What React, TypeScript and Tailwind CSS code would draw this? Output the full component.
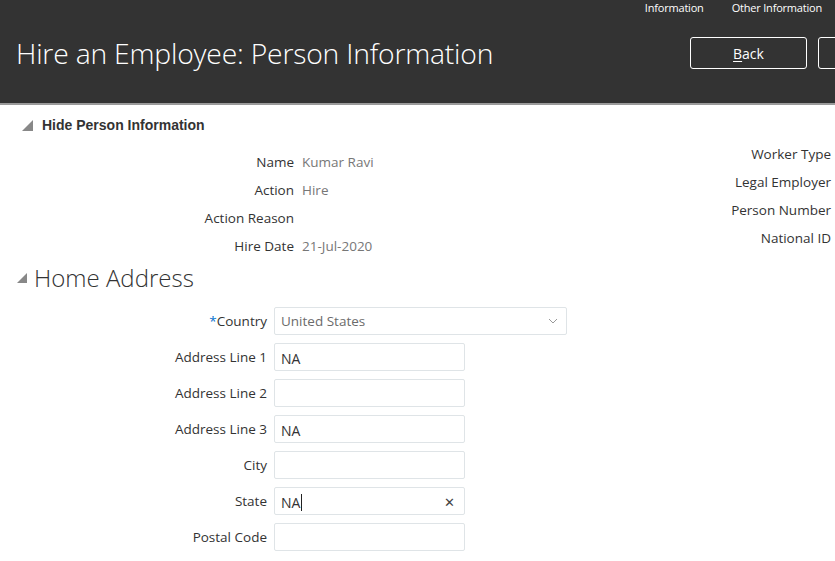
import React from "react";

const ui = { fontFamily: '"Open Sans", "Noto Sans", sans-serif' };

const personLeft = [
  { label: "Name", value: "Kumar Ravi" },
  { label: "Action", value: "Hire" },
  { label: "Action Reason", value: "" },
  { label: "Hire Date", value: "21-Jul-2020" },
];

const personRight = ["Worker Type", "Legal Employer", "Person Number", "National ID"];

const addressFields = [
  { label: "Address Line 1", value: "NA" },
  { label: "Address Line 2", value: "" },
  { label: "Address Line 3", value: "NA" },
  { label: "City", value: "" },
  { label: "State", value: "NA", active: true },
  { label: "Postal Code", value: "" },
];

function Triangle({ size }: { size: number }) {
  return (
    <svg width={size} height={size} viewBox="0 0 10 10" className="shrink-0">
      <path d="M10 0 L10 10 L0 10 Z" fill="#888" />
    </svg>
  );
}

export default function App() {
  return (
    <div className="w-[835px] h-[561px] overflow-hidden bg-white text-[#333]" style={ui}>
      {/* Header */}
      <div className="h-[105px] bg-[#333333] border-b-2 border-[#9a9a9a] relative">
        <div className="flex justify-end gap-[28px] pr-[13px] pt-[1px] text-[11px] text-white leading-[14px] tracking-[-0.2px]">
          <span>Information</span>
          <span>Other Information</span>
        </div>
        <div className="flex items-center justify-between pl-[16px] mt-[18px]">
          <h1 className="text-[28.3px] font-light text-white leading-[40px] tracking-[-0.2px]">
            Hire an Employee: Person Information
          </h1>
          <div className="flex gap-[11px] mr-[-13px]">
            <button className="w-[117px] h-[32px] border border-white rounded-[3px] text-white text-[14px]">
              <span className="underline underline-offset-2">B</span>ack
            </button>
            <button className="w-[30px] h-[32px] border border-white rounded-[3px]" />
          </div>
        </div>
      </div>

      {/* Person information */}
      <div className="flex items-center gap-[9px] pl-[22px] mt-[10px]">
        <Triangle size={11} />
        <span className="text-[14px] font-bold text-[#333]" style={{ fontFamily: '"Liberation Sans", Arial, sans-serif' }}>
          Hide Person Information
        </span>
      </div>

      <div className="flex justify-between pr-[4px] mt-[4px]">
        <div className="flex flex-col pt-[8px]">
          {personLeft.map((r) => (
            <div key={r.label} className="flex h-[28px] items-center text-[13.5px]">
              <span className="w-[294px] text-right">{r.label}</span>
              <span className="pl-[8px] text-[#777]">{r.value}</span>
            </div>
          ))}
        </div>
        <div className="flex flex-col">
          {personRight.map((l) => (
            <div key={l} className="h-[28px] flex items-center justify-end text-[13.5px]">
              {l}
            </div>
          ))}
        </div>
      </div>

      {/* Home Address */}
      <div className="flex items-center gap-[7px] pl-[17px] mt-[2px]">
        <Triangle size={10} />
        <span className="text-[24px] font-light text-[#333] leading-[32px]">Home Address</span>
      </div>

      <div className="flex flex-col mt-[13px]">
        <div className="flex items-center h-[28px]">
          <span className="w-[267px] text-right text-[13.5px]">
            <span className="text-[#0572ce]">*</span>Country
          </span>
          <div className="ml-[7px] w-[293px] h-[28px] border border-[#dfe4e7] rounded-[2px] flex items-center justify-between pl-[6px] pr-[8px] text-[13.5px] text-[#6b6b6b]">
            <span>United States</span>
            <svg width="10" height="6" viewBox="0 0 10 6">
              <path d="M1 1 L5 5 L9 1" fill="none" stroke="#999" strokeWidth="1" />
            </svg>
          </div>
        </div>
        <div className="flex flex-col gap-[8px] mt-[8px]">
          {addressFields.map((f) => (
            <div key={f.label} className="flex items-center h-[28px]">
              <span className="w-[267px] text-right text-[13.5px]">{f.label}</span>
              <div className="ml-[7px] w-[191px] h-[28px] border border-[#dfe4e7] rounded-[2px] flex items-center justify-between pl-[6px] pr-[9px] text-[14px] text-[#333] pt-[3px]">
                <span className="flex items-center">
                  {f.value}
                  {f.active && <span className="inline-block w-[1px] h-[17px] bg-[#222] ml-[1px]" />}
                </span>
                {f.active && <span className="text-[13px] text-[#444] leading-none">✕</span>}
              </div>
            </div>
          ))}
        </div>
      </div>
    </div>
  );
}
